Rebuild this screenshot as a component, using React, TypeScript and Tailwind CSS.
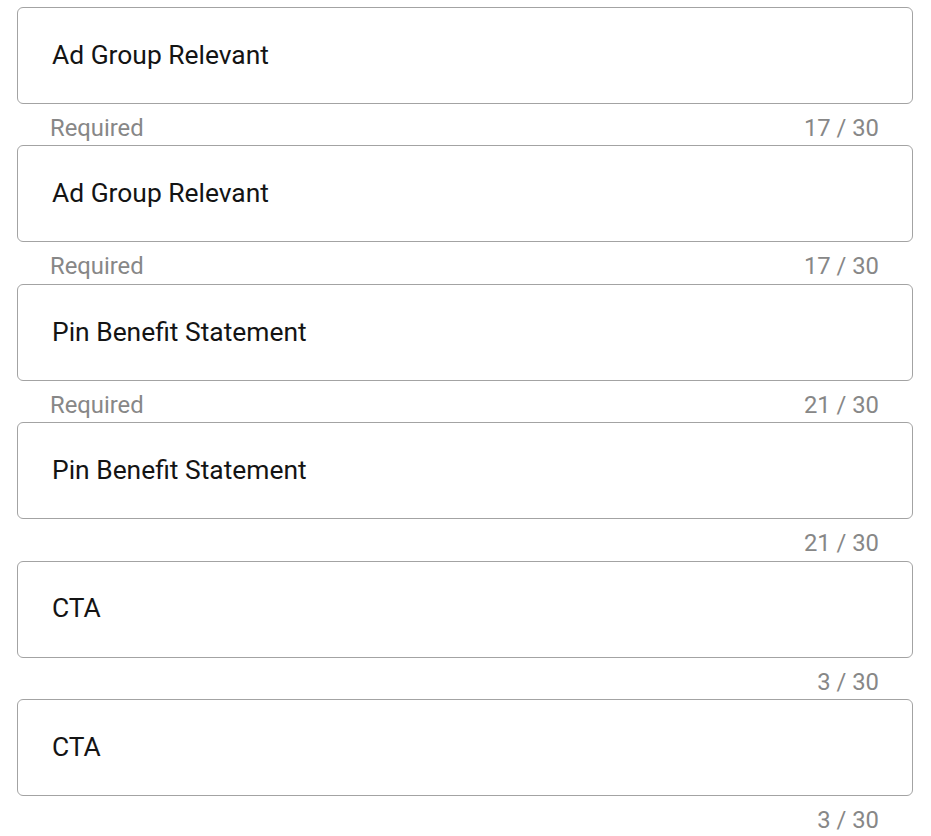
const fields = [
  { value: "Ad Group Relevant", helper: "Required" },
  { value: "Ad Group Relevant", helper: "Required" },
  { value: "Pin Benefit Statement", helper: "Required" },
  { value: "Pin Benefit Statement", helper: "" },
  { value: "CTA", helper: "" },
  { value: "CTA", helper: "" },
];

const TextField = ({ value, helper }: { value: string; helper: string }) => {
  return (
    <div className="flex flex-col">
      <div className="flex h-[97px] items-center rounded-[6px] border border-[#a3a3a3] bg-white pl-[34px] pr-4">
        <span className="pb-[1px] text-[26.4px] leading-none text-[#141414]">{value}</span>
      </div>
      <div className="flex h-[41.4px] items-start justify-between pl-[33px] pr-[34px] pt-[10px] text-[23.8px] leading-[28px] text-[#878787]">
        <span>{helper}</span>
        <span>
          {value.length} / 30
        </span>
      </div>
    </div>
  );
};

export default function App() {
  return (
    <div
      className="min-h-[836px] w-full bg-white pl-[17px] pr-[18px] pt-[7px]"
      style={{ fontFamily: "Roboto, 'Liberation Sans', sans-serif" }}
    >
      {fields.map((f, i) => (
        <TextField key={i} value={f.value} helper={f.helper} />
      ))}
    </div>
  );
}
